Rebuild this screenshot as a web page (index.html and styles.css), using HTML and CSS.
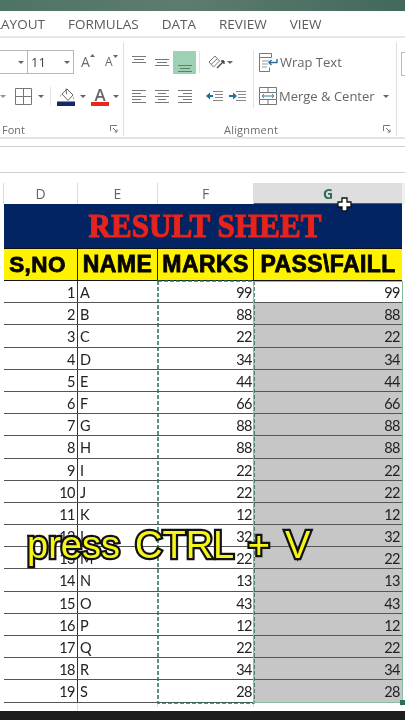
FILE: index.html
```html
<!DOCTYPE html>
<html lang="en">
<head>
<meta charset="utf-8">
<title>Result Sheet</title>
<link rel="stylesheet" href="styles.css">
</head>
<body>
<div class="app">
  <div class="titlebar"></div>
  <nav class="tabs">
    <span class="tab t-layout">LAYOUT</span>
    <span class="tab">FORMULAS</span>
    <span class="tab">DATA</span>
    <span class="tab">REVIEW</span>
    <span class="tab">VIEW</span>
  </nav>
  <div class="ribbon">
    <section class="group g-font">
      <div class="rrow r1">
        <div class="combo c-name"><i class="caret"></i></div>
        <div class="combo c-size"><span>11</span><i class="caret"></i></div>
        <span class="grow-a big">A<svg class="tick" width="5" height="4" viewBox="0 0 5 4"><path d="M0 3 2.500 0 5 3z" fill="#666"/></svg></span>
        <span class="grow-a small">A<svg class="tick" width="5" height="4" viewBox="0 0 5 4"><path d="M0 0 2.500 3 5 0z" fill="#666"/></svg></span>
      </div>
      <div class="rrow r2">
        <i class="caret c0"></i>
        <svg class="i-border" width="17" height="17" viewBox="0 0 17 17"><path d="M.5.500h16v16H.5zM8.500.500v16M.5 8.500h16" fill="none" stroke="#777"/></svg>
        <i class="caret c1"></i>
        <span class="vsep"></span>
        <svg class="i-fill" width="19" height="19" viewBox="0 0 19 19"><path d="M5 7 10 2l6 6-5 5.500z" fill="#fff" stroke="#666"/><path d="M9 1.500 9.500 7" stroke="#666"/><path d="M4.500 6.500c-1 1.500-1.500 2.800-1 3.500.5-.6 1-2 1-3.500z" fill="#888"/><path d="M16 9c1 1.500 1.500 2.500 1 3.300-.7.300-1.400-.5-1-3.300z" fill="#e8a33a"/><rect x="0" y="14.500" width="18" height="4.500" fill="#0f2a66"/></svg>
        <i class="caret c2"></i>
        <span class="font-color">A</span>
        <i class="caret c3"></i>
      </div>
      <div class="glabel l-font"><span>Font</span><svg class="launch" width="8" height="8" viewBox="0 0 8 8"><path d="M.5 6V.5H7M3 3l4 4M7 4.500V7H4.500" fill="none" stroke="#777"/></svg></div>
    </section>
    <section class="group g-align">
      <div class="g-cols">
        <div class="a-main">
          <div class="rrow ar1">
            <svg class="ico" width="14" height="10" viewBox="0 0 14 10"><path d="M0 .5h14M2 3.500h10M0 6.500h14" stroke="#777"/></svg>
            <svg class="ico mid" width="14" height="10" viewBox="0 0 14 10"><path d="M0 .5h14M2 3.500h10M0 6.500h14" stroke="#777"/></svg>
            <span class="hl"><svg width="14" height="10" viewBox="0 0 14 10"><path d="M0 .5h14M2 3.500h10M0 6.500h14" stroke="#5d7f70"/></svg></span>
            <span class="vsep s2"></span>
            <svg class="i-orient" width="17" height="15" viewBox="0 0 17 15"><path d="M1 7 7 1M3 9.500 9 4M5.500 12l6-6M1 7l4.500 5M7 1l4.500 5" fill="none" stroke="#777"/><path d="M9 13 16 6M16 6h-3M16 6v3" fill="none" stroke="#444" stroke-width="1.300"/></svg>
            <i class="caret c4"></i>
          </div>
          <div class="rrow ar2">
            <svg class="ico" width="14" height="14" viewBox="0 0 14 14"><path d="M0 1.500h14M0 4.500h9M0 7.500h14M0 10.500h9M0 13.500h14" stroke="#777"/></svg>
            <svg class="ico mid2" width="14" height="14" viewBox="0 0 14 14"><path d="M0 1.500h14M3 4.500h8M0 7.500h14M3 10.500h8M0 13.500h14" stroke="#777"/></svg>
            <svg class="ico mid2" width="14" height="14" viewBox="0 0 14 14"><path d="M0 1.500h14M5 4.500h9M0 7.500h14M5 10.500h9M0 13.500h14" stroke="#777"/></svg>
            <svg class="i-ind1" width="17" height="12" viewBox="0 0 17 12"><path d="M7 1.500h10M9 4.500h8M9 7.500h8M7 10.500h10" stroke="#888"/><path d="M0 6l4-3.500V5h3v2H4v2.500z" fill="#1f6f9c"/></svg>
            <svg class="i-ind2" width="17" height="12" viewBox="0 0 17 12"><path d="M7 1.500h10M9 4.500h8M9 7.500h8M7 10.500h10" stroke="#888"/><path d="M8 6 4 2.500V5H0v2h4v2.500z" fill="#1f6f9c"/></svg>
          </div>
        </div>
        <span class="vsep s3"></span>
        <div class="a-wrap">
          <div class="wline">
            <svg width="19" height="19" viewBox="0 0 19 19"><path d="M.5.500h12v4H.5zM.5 4.500v14h10v-4" fill="none" stroke="#777"/><path d="M3 8h7M3 11h6M3 14h5" stroke="#999"/><path d="M18 6v3.500h-8M12.500 7l-2.500 2.500 2.500 2.500" fill="none" stroke="#2a6fa0" stroke-width="1.400"/></svg>
            <span class="wtxt">Wrap Text</span>
          </div>
          <div class="wline m2">
            <svg width="18" height="18" viewBox="0 0 18 18"><path d="M.5.500h17v17H.5zM.5 5.500h17M.5 12.500h17M9 .5v5M9 12.500v5" fill="none" stroke="#777"/><path d="M3 9h12M5 7 3 9l2 2M13 7l2 2-2 2" fill="none" stroke="#3a7c9c"/></svg>
            <span class="wtxt">Merge &amp; Center</span>
            <i class="caret c5"></i>
          </div>
        </div>
      </div>
      <div class="glabel l-align"><span>Alignment</span><svg class="launch" width="8" height="8" viewBox="0 0 8 8"><path d="M.5 6V.5H7M3 3l4 4M7 4.500V7H4.500" fill="none" stroke="#777"/></svg></div>
    </section>
    <section class="g-next"><div class="next-box"></div></section>
  </div>
  <div class="ribbon-gap"></div>
  <div class="formula"></div>
  <div class="fgap"></div>
  <div class="sheet">
    <div class="colheads">
      <span class="ch ch0"></span><span class="ch">D</span><span class="ch">E</span><span class="ch">F</span><span class="ch sel">G</span><span class="ch chx"></span>
    </div>
    <div class="band"><span class="band-title">RESULT SHEET</span></div>
    <div class="heads">
      <span class="h sno">S,NO</span><span class="h">NAME</span><span class="h">MARKS</span><span class="h last">PASS\FAILL</span>
    </div>
    <div class="rows">
      <div class="row"><span class="n">1</span><span class="l">A</span><span class="m">99</span><span class="p first">99</span></div>
      <div class="row"><span class="n">2</span><span class="l">B</span><span class="m">88</span><span class="p">88</span></div>
      <div class="row"><span class="n">3</span><span class="l">C</span><span class="m">22</span><span class="p">22</span></div>
      <div class="row"><span class="n">4</span><span class="l">D</span><span class="m">34</span><span class="p">34</span></div>
      <div class="row"><span class="n">5</span><span class="l">E</span><span class="m">44</span><span class="p">44</span></div>
      <div class="row"><span class="n">6</span><span class="l">F</span><span class="m">66</span><span class="p">66</span></div>
      <div class="row"><span class="n">7</span><span class="l">G</span><span class="m">88</span><span class="p">88</span></div>
      <div class="row"><span class="n">8</span><span class="l">H</span><span class="m">88</span><span class="p">88</span></div>
      <div class="row"><span class="n">9</span><span class="l">I</span><span class="m">22</span><span class="p">22</span></div>
      <div class="row"><span class="n">10</span><span class="l">J</span><span class="m">22</span><span class="p">22</span></div>
      <div class="row"><span class="n">11</span><span class="l">K</span><span class="m">12</span><span class="p">12</span></div>
      <div class="row"><span class="n">12</span><span class="l">L</span><span class="m">32</span><span class="p">32</span></div>
      <div class="row"><span class="n">13</span><span class="l">M</span><span class="m">22</span><span class="p">22</span></div>
      <div class="row"><span class="n">14</span><span class="l">N</span><span class="m">13</span><span class="p">13</span></div>
      <div class="row"><span class="n">15</span><span class="l">O</span><span class="m">43</span><span class="p">43</span></div>
      <div class="row"><span class="n">16</span><span class="l">P</span><span class="m">12</span><span class="p">12</span></div>
      <div class="row"><span class="n">17</span><span class="l">Q</span><span class="m">22</span><span class="p">22</span></div>
      <div class="row"><span class="n">18</span><span class="l">R</span><span class="m">34</span><span class="p">34</span></div>
      <div class="row"><span class="n">19</span><span class="l">S</span><span class="m">28</span><span class="p">28</span></div>
    </div>
    <div class="blank"><span></span><span></span><span></span><span></span><span></span></div>
    <svg class="ants" width="98" height="424" viewBox="0 0 98 424"><rect x="1" y="1" width="96" height="422" fill="none" stroke="#2b6b55" stroke-width="1.500" stroke-dasharray="4 2"/></svg>
    <div class="selbox"><i class="handle"></i></div>
    <svg class="cursor" width="15" height="15" viewBox="0 0 15 15"><path d="M5 1h5v4h4v5h-4v4H5v-4H1V5h4z" fill="#fff" stroke="#111" stroke-width="1.300"/></svg>
  </div>
  <div class="footer"></div>
  <div class="caption">press CTRL + V</div>
</div>
</body>
</html>
```
FILE: styles.css
```css
* { box-sizing: border-box; }
html, body { margin: 0; padding: 0; background: #fff; }
.app { position: relative; width: 405px; height: 720px; overflow: hidden; display: flex; flex-direction: column; font-family: "Open Sans", sans-serif; filter: blur(0.35px); }

.titlebar { height: 11px; flex: none; background: linear-gradient(90deg, #4e7465, #5d7c6e 45%, #42695c); }

.tabs { height: 27px; flex: none; display: flex; align-items: center; gap: 23px; border-bottom: 2px solid #e6e6e6; font-size: 13.500px; color: #5a5a5a; padding-top: 1px; }
.t-layout { margin-left: -6px; }

.ribbon { height: 101px; flex: none; display: flex; border-bottom: 2px solid #e4e4e4; }
.group { position: relative; display: flex; flex-direction: column; height: 94px; margin-top: 4px; border-right: 1px solid #dedede; }
.g-font { width: 124px; flex: none; }
.g-align { width: 273px; flex: none; }
.g-next { flex: 1; }
.next-box { width: 12px; height: 24px; margin: 14px 0 0 4px; border: 1px solid #bbb; }

.rrow { display: flex; align-items: center; }
.caret { display: block; flex: none; width: 0; height: 0; border-left: 3px solid transparent; border-right: 3px solid transparent; border-top: 3px solid #666; }

.r1 { height: 24px; margin-top: 8px; }
.combo { height: 24px; border: 1px solid #b8b8b8; display: flex; align-items: center; justify-content: flex-end; padding-right: 3px; flex: none; }
.c-name { width: 28px; border-left: 0; }
.c-size { width: 46px; justify-content: space-between; border-left: 0; padding-left: 3px; padding-right: 3px; font-size: 13px; color: #444; }
.grow-a { display: flex; align-items: flex-start; color: #6a6a6a; line-height: 1; flex: none; }
.big { font-size: 14px; margin-left: 7px; width: 24px; }
.small { font-size: 12px; margin-left: 0; width: 14px; }
.tick { margin-top: -1px; }

.r2 { height: 20px; margin-top: 12px; }
.c0 { margin-left: 0; opacity: .7; }
.i-border { margin-left: 9px; flex: none; }
.c1 { margin-left: 6px; }
.vsep { display: block; flex: none; width: 1px; background: #e2e2e2; height: 18px; margin-left: 6px; }
.i-fill { margin-left: 6px; flex: none; }
.c2 { margin-left: 4px; }
.font-color { width: 18px; margin-left: 5px; flex: none; height: 19px; font-size: 17px; line-height: 15px; text-align: center; color: #666; border-bottom: 4px solid #e8261c; font-weight: 600; }
.c3 { margin-left: 4px; }

.glabel { display: flex; align-items: center; justify-content: space-between; font-size: 11px; color: #6c6c6c; position: absolute; bottom: -2px; left: 0; right: 0; height: 18px; }
.l-font { padding: 0 5px 0 2px; }
.l-align { padding: 0 5px 0 0; }
.l-align span { margin-left: 100px; letter-spacing: .2px; }
.launch { flex: none; }

.g-cols { display: flex; height: 72px; }
.a-main { width: 129px; flex: none; padding-left: 8px; }
.ar1 { height: 24px; margin-top: 8px; }
.ico { flex: none; }
.mid { margin-left: 9px; margin-top: 4px; }
.ar1 .ico:first-child { margin-bottom: 2px; }
.hl { width: 23px; height: 23px; background: #9ed0b3; flex: none; margin-left: 4px; display: flex; align-items: flex-end; justify-content: center; }
.hl svg { margin-bottom: -1px; }
.s2 { margin-left: 3px; height: 22px; }
.i-orient { flex: none; margin-left: 8px; }
.c4 { margin-left: 2px; }
.ar2 { height: 16px; margin-top: 14px; }
.mid2 { margin-left: 9px; }
.i-ind1 { flex: none; margin-left: 14px; }
.i-ind2 { flex: none; margin-left: 6px; }
.s3 { height: 58px; margin: 8px 0 0 0; }
.a-wrap { flex: 1; padding-left: 5px; display: flex; flex-direction: column; }
.wline { display: flex; align-items: center; height: 24px; margin-top: 8px; color: #666; font-size: 13px; }
.m2 { margin-top: 10px; }
.wline svg { flex: none; }
.wtxt { margin-left: 2px; white-space: nowrap; }
.c5 { margin-left: 8px; }

.ribbon-gap { height: 8px; flex: none; border-bottom: 1px solid #cfcfcf; }
.formula { height: 26px; flex: none; border-bottom: 1px solid #cfcfcf; }
.fgap { height: 10px; flex: none; }

.sheet { position: relative; height: 528px; flex: none; display: flex; flex-direction: column; }

.colheads { display: grid; grid-template-columns: 4px 74px 80px 96px 148px 3px; height: 21px; flex: none; }
.ch { display: flex; align-items: center; justify-content: center; font-size: 14px; color: #666; border-right: 1px solid #dcdcdc; }
.ch.sel { background: #dedede; color: #2d6e57; font-weight: 700; border: 0; border-bottom: 1px solid #2d6e57; }
.ch.chx { border: 0; background: #f0f0f0; }

.band { height: 44px; flex: none; margin-left: 4px; width: 398px; background: #032463; display: flex; align-items: center; justify-content: center; }
.band-title { font-family: "Liberation Serif", serif; font-weight: 700; font-size: 31px; color: #e6241e; -webkit-text-stroke: 1px #e6241e; letter-spacing: .1px; transform: translate(2px, 0) scaleY(1.08); text-shadow: 1px 1px 0 #5a0d14; white-space: nowrap; }

.heads { height: 33px; flex: none; margin-left: 4px; width: 398px; display: grid; grid-template-columns: 74px 80px 96px 148px; background: #fff200; border-top: 1px solid #111; border-bottom: 1px solid #111; }
.h { display: flex; align-items: center; justify-content: center; font-family: "Liberation Sans", sans-serif; font-weight: 700; font-size: 23px; color: #050505; -webkit-text-stroke: .8px #050505; letter-spacing: .4px; border-right: 1px solid #222; white-space: nowrap; }
.h.sno { padding-right: 6px; font-size: 22.500px; }
.h.last { border-right: 0; }

.rows { flex: none; margin-left: 4px; width: 398px; }
.row { display: grid; grid-template-columns: 74px 80px 96px 148px; grid-template-rows: 21.200px; height: 22.200px; font-family: Lato, sans-serif; font-size: 14.500px; letter-spacing: -.5px; color: #222; border-bottom: 1px solid #555; line-height: 23px; }
.row span { padding: 0 2px; white-space: nowrap; }
.n, .m, .p { text-align: right; }
.n { border-right: 1px solid #333; }
.p { background: #c6c6c6; }
.p.first { background: #fff; }
.l { padding-left: 3px; }

.blank { flex: 1; margin-left: 4px; width: 398px; display: grid; grid-template-columns: 74px 80px 96px 148px; }
.blank span { border-right: 1px solid #dcdcdc; }

.ants { position: absolute; left: 157px; top: 97px; }
.selbox { position: absolute; left: 253px; top: 98px; width: 150px; height: 422px; border: 1.500px solid #84bfa2; }
.handle { position: absolute; right: -3px; bottom: -3px; width: 5px; height: 5px; background: #2d6e57; }
.cursor { position: absolute; left: 337px; top: 14px; }

.footer { flex: 1; background: #1d1d1d; position: relative; }

.caption { position: absolute; left: 27px; top: 523px; font-family: "Liberation Sans", sans-serif; font-size: 38px; line-height: 44px; color: #f5f518; -webkit-text-stroke: 4.500px #111; paint-order: stroke fill; white-space: nowrap; word-spacing: 4.500px; }
```
